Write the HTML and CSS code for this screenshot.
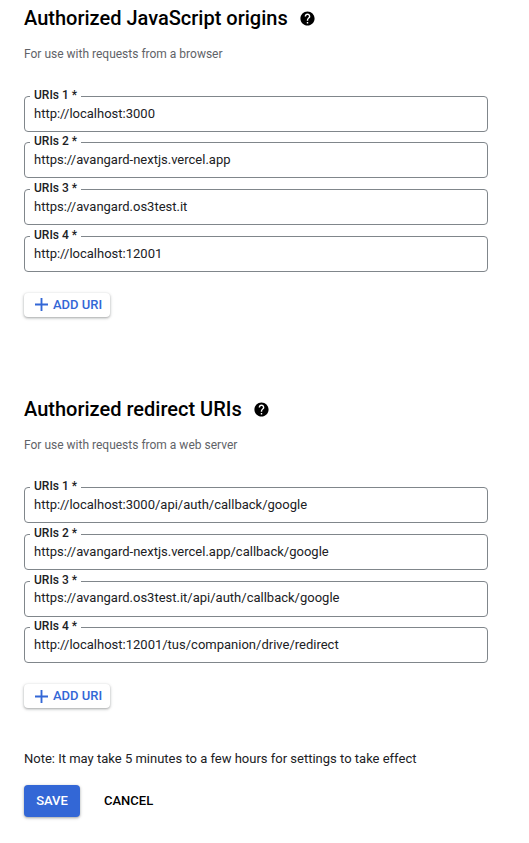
FILE: index.html
```html
<!DOCTYPE html>
<html lang="en">
<head>
    <meta charset="UTF-8">
    <title>Client settings</title>
    <link rel="stylesheet" href="styles.css">
</head>
<body>
    <section class="uri-section">
        <h2 class="section-title">Authorized JavaScript origins
            <svg class="help-icon" viewBox="0 0 24 24" aria-hidden="true"><path d="M12 2C6.48 2 2 6.48 2 12s4.48 10 10 10 10-4.48 10-10S17.52 2 12 2zm1 17h-2v-2h2v2zm2.07-7.75-.9.92C13.45 12.9 13 13.5 13 15h-2v-.5c0-1.1.45-2.1 1.17-2.83l1.24-1.26c.37-.36.59-.86.59-1.41 0-1.1-.9-2-2-2s-2 .9-2 2H8c0-2.21 1.79-4 4-4s4 1.79 4 4c0 .88-.36 1.68-.93 2.25z"/></svg>
        </h2>
        <p class="section-hint">For use with requests from a browser</p>
        <div class="uri-list">
            <div class="uri-field"><label class="uri-label">URIs 1 *</label><div class="uri-value">http://localhost:3000</div></div>
            <div class="uri-field"><label class="uri-label">URIs 2 *</label><div class="uri-value">https://avangard-nextjs.vercel.app</div></div>
            <div class="uri-field"><label class="uri-label">URIs 3 *</label><div class="uri-value">https://avangard.os3test.it</div></div>
            <div class="uri-field"><label class="uri-label">URIs 4 *</label><div class="uri-value">http://localhost:12001</div></div>
        </div>
        <button class="add-button">
            <svg class="add-icon" viewBox="0 0 14 14" aria-hidden="true"><path d="M6 0h2v6h6v2H8v6H6V8H0V6h6z"/></svg>
            ADD URI
        </button>
    </section>

    <section class="uri-section redirect-section">
        <h2 class="section-title">Authorized redirect URIs
            <svg class="help-icon" viewBox="0 0 24 24" aria-hidden="true"><path d="M12 2C6.48 2 2 6.48 2 12s4.48 10 10 10 10-4.48 10-10S17.52 2 12 2zm1 17h-2v-2h2v2zm2.07-7.75-.9.92C13.45 12.9 13 13.5 13 15h-2v-.5c0-1.1.45-2.1 1.17-2.83l1.24-1.26c.37-.36.59-.86.59-1.41 0-1.1-.9-2-2-2s-2 .9-2 2H8c0-2.21 1.79-4 4-4s4 1.79 4 4c0 .88-.36 1.68-.93 2.25z"/></svg>
        </h2>
        <p class="section-hint">For use with requests from a web server</p>
        <div class="uri-list">
            <div class="uri-field"><label class="uri-label">URIs 1 *</label><div class="uri-value">http://localhost:3000/api/auth/callback/google</div></div>
            <div class="uri-field"><label class="uri-label">URIs 2 *</label><div class="uri-value">https://avangard-nextjs.vercel.app/callback/google</div></div>
            <div class="uri-field"><label class="uri-label">URIs 3 *</label><div class="uri-value">https://avangard.os3test.it/api/auth/callback/google</div></div>
            <div class="uri-field"><label class="uri-label">URIs 4 *</label><div class="uri-value">http://localhost:12001/tus/companion/drive/redirect</div></div>
        </div>
        <button class="add-button">
            <svg class="add-icon" viewBox="0 0 14 14" aria-hidden="true"><path d="M6 0h2v6h6v2H8v6H6V8H0V6h6z"/></svg>
            ADD URI
        </button>
    </section>

    <p class="note">Note: It may take 5 minutes to a few hours for settings to take effect</p>
    <div class="form-actions">
        <button class="save-button">SAVE</button>
        <button class="cancel-button">CANCEL</button>
    </div>
</body>
</html>
```

FILE: styles.css
```css
body {
    margin: 0;
    padding: 0 41px 0 24px;
    height: 843px;
    box-sizing: border-box;
    overflow: hidden;
    background: #fff;
    color: #202124;
    font-family: Roboto, "Liberation Sans", sans-serif;
}
.section-title {
    display: flex;
    align-items: center;
    margin: 6px 0 0;
    height: 24px;
    font-size: 20px;
    font-weight: 500;
    line-height: 24px;
    color: #000;
}
.help-icon {
    width: 17px;
    height: 17px;
    margin-left: 11.5px;
    fill: #000;
}
.section-hint {
    margin: 16px 0 0;
    font-size: 12px;
    line-height: 16px;
    color: #5f6368;
}
.uri-list {
    display: flex;
    flex-direction: column;
    gap: 10.67px;
    margin-top: 33.8px;
}
.uri-field {
    position: relative;
    height: 36px;
    box-sizing: border-box;
    border: 1px solid #80868b;
    border-radius: 4px;
}
.uri-label {
    position: absolute;
    top: -9px;
    left: 5px;
    padding: 0 4px;
    background: #fff;
    font-size: 12px;
    font-weight: 500;
    line-height: 14px;
    color: #202124;
}
.uri-value {
    padding: 8.9px 9px 0;
    font-size: 13px;
    line-height: 16px;
    color: #202124;
}
.add-button {
    display: flex;
    align-items: center;
    height: 24px;
    margin-top: 21px;
    padding: 0 8px 0 11px;
    border: 0;
    border-radius: 4px;
    background: #fff;
    box-shadow: 0 1px 2px rgba(60, 64, 67, 0.3), 0 1px 3px 1px rgba(60, 64, 67, 0.15);
    color: #3367d6;
    font-family: inherit;
    font-size: 13px;
    font-weight: 500;
    line-height: 16px;
}
.add-icon {
    width: 13px;
    height: 13px;
    margin-right: 5px;
    fill: #3367d6;
}
.redirect-section {
    margin-top: 80.7px;
}
.note {
    margin: 43px 0 0;
    font-size: 13px;
    line-height: 16px;
    color: #202124;
}
.form-actions {
    display: flex;
    align-items: center;
    margin-top: 17.5px;
}
.save-button, .cancel-button {
    height: 32px;
    border: 0;
    border-radius: 4px;
    font-family: inherit;
    font-size: 13px;
    font-weight: 500;
}
.save-button {
    width: 56px;
    padding: 0;
    background: #3367d6;
    color: #fff;
    box-shadow: 0 1px 2px rgba(60, 64, 67, 0.3), 0 1px 3px 1px rgba(60, 64, 67, 0.15);
}
.cancel-button {
    margin-left: 24px;
    padding: 0;
    background: none;
    color: #000;
}
```
